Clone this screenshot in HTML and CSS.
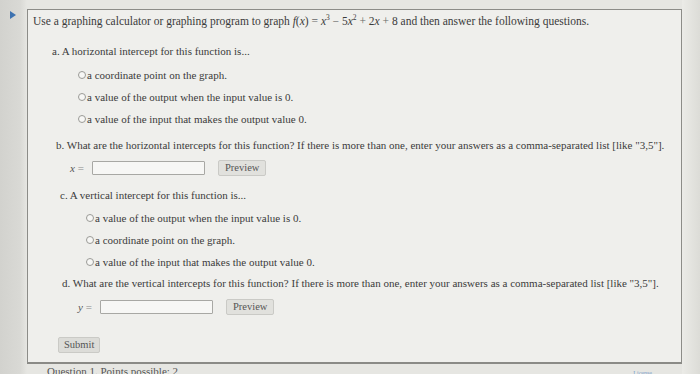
FILE: index.html
```html
<!DOCTYPE html>
<html>
<head>
<meta charset="utf-8">
<link rel="stylesheet" href="styles.css">
</head>
<body>
<div class="screen">
  <div class="rail"><span class="tri"></span></div>
  <div class="main">
    <div class="qbox">
      <p class="intro">Use a graphing calculator or graphing program to graph <span class="m">f</span>(<span class="m">x</span>) <span class="op">=</span> <span class="m">x</span><sup>3</sup> <span class="op">−</span> 5<span class="m">x</span><sup>2</sup> <span class="op">+</span> 2<span class="m">x</span> <span class="op">+</span> 8 and then answer the following questions.</p>

      <div class="part part-a">
        <p class="ptext">a. A horizontal intercept for this function is...</p>
        <ul class="opts">
          <li><span class="radio"></span>a coordinate point on the graph.</li>
          <li><span class="radio"></span>a value of the output when the input value is 0.</li>
          <li><span class="radio"></span>a value of the input that makes the output value 0.</li>
        </ul>
      </div>

      <div class="part part-b">
        <p class="ptext">b. What are the horizontal intercepts for this function? If there is more than one, enter your answers as a comma-separated list [like "3,5"].</p>
        <div class="ansrow">
          <span class="lbl"><span class="m">x</span> <span class="eq">=</span></span>
          <span class="field"></span>
          <span class="btn">Preview</span>
        </div>
      </div>

      <div class="part part-c">
        <p class="ptext">c. A vertical intercept for this function is...</p>
        <ul class="opts">
          <li><span class="radio"></span>a value of the output when the input value is 0.</li>
          <li><span class="radio"></span>a coordinate point on the graph.</li>
          <li><span class="radio"></span>a value of the input that makes the output value 0.</li>
        </ul>
      </div>

      <div class="part part-d">
        <p class="ptext">d. What are the vertical intercepts for this function? If there is more than one, enter your answers as a comma-separated list [like "3,5"].</p>
        <div class="ansrow">
          <span class="lbl"><span class="m">y</span> <span class="eq">=</span></span>
          <span class="field"></span>
          <span class="btn">Preview</span>
        </div>
      </div>

      <div class="submitrow"><span class="btn submit">Submit</span></div>
    </div>
    <div class="footer">
      <span class="qinfo">Question 1. Points possible: 2</span>
      <span class="license">License</span>
    </div>
  </div>
  <div class="edge"></div>
</div>
</body>
</html>
```
FILE: styles.css
```css
html, body {
  margin: 0;
  padding: 0;
  height: 100%;
  overflow: hidden;
}
body {
  background: #e6e6e2;
  font-family: "Liberation Serif", "Times New Roman", serif;
  font-size: 11px;
  color: #3b3b3b;
}
.screen {
  display: flex;
  height: 374px;
}
.rail {
  width: 27px;
  flex: none;
  background: linear-gradient(to right, #d2d2ce 0, #d9d9d5 20px, #e6e6e2 27px);
  position: relative;
}
.tri {
  position: absolute;
  left: 10px;
  top: 11px;
  width: 0;
  height: 0;
  border-top: 4px solid transparent;
  border-bottom: 4px solid transparent;
  border-left: 6px solid #3d72b0;
}
.main {
  width: 655px;
  flex: none;
  display: flex;
  flex-direction: column;
  padding-top: 9px;
}
.edge {
  flex: 1;
  background: linear-gradient(to right, #ebebe7 0, #dcdcd7 100%);
}
.qbox {
  border: 1px solid #8c8c88;
  border-bottom: 2px solid #8a8a86;
  background: #efefec;
  padding: 4px 0 9px 0;
}
p { margin: 0; }
.intro {
  font-size: 11.5px;
  line-height: 15px;
  padding-left: 5px;
  white-space: nowrap;
}
.m { font-style: italic; }
.op { color: #666; }
sup { font-size: 7.5px; line-height: 0; vertical-align: 5px; }
.part { padding-left: 24px; }
.part-a { margin-top: 15px; }
.part-b { margin-top: 8px; padding-left: 28px; }
.part-c { margin-top: 12px; padding-left: 32px; }
.part-d { margin-top: 3px; padding-left: 34px; }
.ptext { line-height: 14px; white-space: nowrap; }
.opts {
  list-style: none;
  margin: 6px 0 0 0;
  padding: 0 0 0 26px;
}
.part-c .opts { margin-top: 5px; }
.opts li {
  height: 22px;
  line-height: 22px;
  display: flex;
  align-items: center;
  white-space: nowrap;
}
.radio {
  width: 6px;
  height: 6px;
  border: 1px solid #9a9a96;
  border-radius: 50%;
  background: #f7f7f5;
  margin-right: 1px;
  flex: none;
}
.ansrow {
  display: flex;
  align-items: center;
  height: 16px;
  margin-top: 8px;
  padding-left: 14px;
}
.part-d .ansrow { margin-top: 9px; padding-left: 16px; }
.lbl {
  width: 22px;
  color: #555;
}
.eq { color: #888; }
.field {
  width: 111px;
  height: 12px;
  border: 1px solid #a8a8a4;
  background: #f7f7f5;
  border-radius: 1px;
}
.btn {
  display: inline-block;
  height: 14px;
  line-height: 14px;
  padding: 0 6px;
  border: 1px solid #cacac6;
  background: #e1e1dd;
  border-radius: 2px;
  color: #555;
  font-size: 10.5px;
  margin-left: 13px;
}
.submitrow {
  margin-top: 22px;
  padding-left: 30px;
}
.btn.submit {
  margin-left: 0;
  padding: 0 5px;
  background: #dcdcd8;
}
.footer {
  display: flex;
  justify-content: space-between;
  align-items: flex-start;
  flex: 1;
  padding: 1px 30px 0 20px;
  font-size: 11px;
  overflow: hidden;
}
.qinfo { color: #555; line-height: 13px; }
.license { color: #7a9cc8; font-size: 6px; margin-top: 5px; }
```
